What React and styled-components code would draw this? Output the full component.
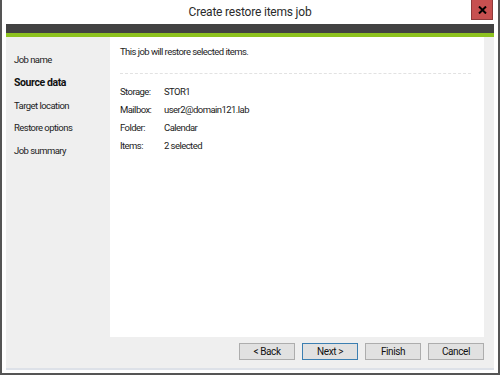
import React from "react";
import styled, { createGlobalStyle } from "styled-components";

const GlobalStyle = createGlobalStyle`
  html, body {
    margin: 0;
    padding: 0;
    background: #ffffff;
  }
  body {
    font-family: Roboto, "Liberation Sans", Arial, sans-serif;
    font-size: 9.5px;
    letter-spacing: -0.55px;
    color: #1e1e1e;
  }
`;

const Window = styled.div`
  width: 500px;
  height: 375px;
  box-sizing: border-box;
  border: 2px solid #555555;
  border-top: none;
  background: #ffffff;
  display: flex;
  flex-direction: column;
  padding: 0 4px 3px 4px;
`;

const TitleBar = styled.div`
  height: 24px;
  flex: none;
  display: flex;
  align-items: center;
  justify-content: center;
  position: relative;
  font-family: Roboto, "Liberation Sans", Arial, sans-serif;
  font-size: 12px;
  letter-spacing: -0.2px;
  color: #2b2b2b;
  padding-bottom: 1px;
  box-sizing: border-box;
`;

const CloseButton = styled.div`
  position: absolute;
  right: 1px;
  top: 0;
  width: 22px;
  height: 20px;
  box-sizing: border-box;
  background: #c75050;
  border: 1px solid #8e3a3a;
  border-top: none;
  display: flex;
  align-items: center;
  justify-content: center;
`;

const Banner = styled.div`
  flex: none;
  height: 9px;
  background: #424242;
  border-bottom: 4px solid #8dc21f;
`;

const Body = styled.div`
  flex: 1;
  display: flex;
  background: #efefef;
  border-bottom: 2px solid #dde1e8;
  min-height: 0;
`;

const Sidebar = styled.nav`
  width: 104px;
  flex: none;
  padding: 17px 0 0 8px;
  box-sizing: border-box;
  display: flex;
  flex-direction: column;
`;

const Step = styled.div`
  height: 22.75px;
  line-height: 12px;
  font-size: ${(p) => (p.$active ? "10.5px" : "9.5px")};
  letter-spacing: ${(p) => (p.$active ? "-0.4px" : "-0.55px")};
  font-weight: ${(p) => (p.$active ? "bold" : "normal")};
  color: ${(p) => (p.$active ? "#111" : "#222")};
`;

const Main = styled.div`
  flex: 1;
  display: flex;
  flex-direction: column;
  padding-right: 10px;
  min-width: 0;
`;

const Panel = styled.section`
  flex: 1;
  background: #ffffff;
  padding: 9px 13px 0 10px;
`;

const Intro = styled.p`
  margin: 0;
  height: 27px;
  line-height: 12px;
  border-bottom: 1px dashed #e2e2e2;
`;

const Details = styled.div`
  display: grid;
  grid-template-columns: 44px auto;
  grid-auto-rows: 18px;
  align-items: center;
  padding-top: 8px;
`;

const Label = styled.span`
  color: #222;
`;

const Value = styled.span`
  color: #222;
`;

const Footer = styled.div`
  flex: none;
  height: 31px;
  display: flex;
  align-items: flex-start;
  justify-content: flex-end;
  gap: 7px;
  padding-top: 6px;
  box-sizing: border-box;
`;

const Button = styled.button`
  width: 56px;
  height: 17px;
  padding: 0;
  margin: 0;
  box-sizing: border-box;
  background: #e1e1e1;
  border: 1px solid ${(p) => (p.$default ? "#3c7fb1" : "#adadad")};
  font-family: Roboto, "Liberation Sans", Arial, sans-serif;
  font-size: 10px;
  letter-spacing: -0.4px;
  color: #111;
`;

const steps = [
  "Job name",
  "Source data",
  "Target location",
  "Restore options",
  "Job summary",
];

const details = [
  ["Storage:", "STOR1"],
  ["Mailbox:", "user2@domain121.lab"],
  ["Folder:", "Calendar"],
  ["Items:", "2 selected"],
];

export default function App() {
  return (
    <>
      <GlobalStyle />
      <Window>
        <TitleBar>
          Create restore items job
          <CloseButton>
            <svg width="9" height="8" viewBox="0 0 9 8">
              <path
                d="M1 0.5 L8 7.5 M8 0.5 L1 7.5"
                stroke="#000"
                strokeWidth="2"
              />
            </svg>
          </CloseButton>
        </TitleBar>
        <Banner />
        <Body>
          <Sidebar>
            {steps.map((s) => (
              <Step key={s} $active={s === "Source data"}>
                {s}
              </Step>
            ))}
          </Sidebar>
          <Main>
            <Panel>
              <Intro>This job will restore selected items.</Intro>
              <Details>
                {details.map(([l, v]) => (
                  <React.Fragment key={l}>
                    <Label>{l}</Label>
                    <Value>{v}</Value>
                  </React.Fragment>
                ))}
              </Details>
            </Panel>
            <Footer>
              <Button>&lt; Back</Button>
              <Button $default>Next &gt;</Button>
              <Button>Finish</Button>
              <Button>Cancel</Button>
            </Footer>
          </Main>
        </Body>
      </Window>
    </>
  );
}
